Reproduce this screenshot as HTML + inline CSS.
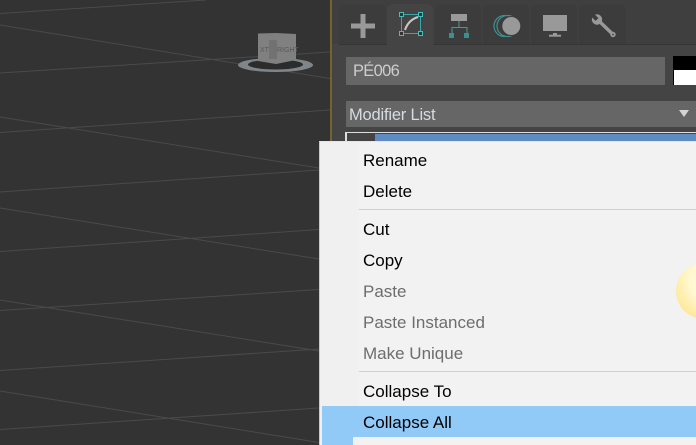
<!DOCTYPE html>
<html>
<head>
<meta charset="utf-8">
<style>
html,body{margin:0;padding:0;width:696px;height:445px;overflow:hidden;background:#333;font-family:"Liberation Sans",sans-serif}
.a{position:absolute}
#root{position:relative;width:696px;height:445px;overflow:hidden}
.tab{position:absolute;top:4px;height:40px;background:#3c3c3c;border-radius:6px 6px 0 0}
.m{position:absolute;left:363px;font-size:17px;line-height:22px;color:#000;white-space:nowrap}
.d{color:#6d6d6d}
.sep{position:absolute;left:359px;right:0;height:1px;background:#d0d0d0}
</style>
</head>
<body>
<div id="root">
<svg class="a" style="left:0;top:0" width="332" height="445" stroke="#4a4a4a" stroke-width="1" fill="none">
<path d="M0 13.500L206 0M0 25L330 78.500M0 73L330 52M0 117L319 168M0 132.500L330 110M0 192L319 170M0 208L319 259M0 251.500L319 229.500M0 300L319 351M0 310.500L319 289.500M0 370.500L319 349M0 391L319 442.500M0 429.500L319 408"/>
</svg>
<svg class="a" style="left:236px;top:30px" width="80" height="44">
<ellipse cx="39.500" cy="35" rx="37.500" ry="7" fill="#7f8588"/>
<ellipse cx="39.500" cy="34.500" rx="27.500" ry="5" fill="#2c2c2c"/>
<path d="M22 3.500L40 3L60 4V30L40 34L22 31Z" fill="#808080"/>
<rect x="33" y="10" width="8" height="19" fill="#727272"/>
<text x="24" y="22" font-family="Liberation Sans" font-size="7" fill="#595959">XT</text>
<text x="41" y="22" font-family="Liberation Sans" font-size="7" fill="#595959">RIGHT</text>
</svg>

<div class="a" style="left:330px;top:0;width:366px;height:445px;background:#444"></div>
<div class="a" style="left:330px;top:0;width:2px;height:445px;background:#75622c"></div>
<div class="a" style="left:332px;top:0;width:364px;height:44px;background:#3f3f3f"></div>
<div class="a" style="left:339px;top:44px;width:357px;height:1px;background:#363636"></div>

<div class="tab" style="left:339px;width:47px"></div>
<div class="tab" style="left:387px;width:46px;background:#444;height:41px"></div>
<div class="tab" style="left:435px;width:46px"></div>
<div class="tab" style="left:483px;width:46px"></div>
<div class="tab" style="left:531px;width:46px"></div>
<div class="tab" style="left:579px;width:47px"></div>

<svg class="a" style="left:330px;top:0" width="310" height="44">
<!-- plus -->
<path d="M21 23.500H30.500V14H35.500V23.500H45V28.500H35.500V38H30.500V28.500H21Z" fill="#999"/>
<!-- modify -->
<path d="M71.500 14.500H90.500V33.500H71.500Z" fill="none" stroke="#3ba7a8" stroke-width="1"/>
<rect x="69.500" y="12.500" width="4" height="4" fill="#333" stroke="#3fc0c0" stroke-width="1"/>
<rect x="88.500" y="12.500" width="4" height="4" fill="#333" stroke="#3fc0c0" stroke-width="1"/>
<rect x="69.500" y="31.500" width="4" height="4" fill="#333" stroke="#3fc0c0" stroke-width="1"/>
<rect x="88.500" y="31.500" width="4" height="4" fill="#333" stroke="#3fc0c0" stroke-width="1"/>
<path d="M75 30C77 24 81.500 19 88 17" fill="none" stroke="#c9c9c9" stroke-width="2"/>
<!-- hierarchy -->
<rect x="121" y="14" width="16" height="7" fill="#999"/>
<path d="M129 21V28M122 33V27.500H137V33" fill="none" stroke="#3f9a9a" stroke-width="1"/>
<rect x="119" y="33" width="5" height="5" fill="#3a8f90"/>
<rect x="134" y="33" width="5" height="5" fill="#3a8f90"/>
<!-- motion -->
<circle cx="174.500" cy="26" r="10.500" fill="none" stroke="#3f8f90" stroke-width="1.200"/>
<circle cx="177.500" cy="26" r="10.500" fill="#3c3c3c" stroke="#3f8f90" stroke-width="1.200"/>
<circle cx="181" cy="26" r="10" fill="#3c3c3c"/>
<circle cx="181.300" cy="26" r="9" fill="#999"/>
<!-- display -->
<rect x="213" y="15" width="24" height="16" fill="#999"/>
<rect x="223" y="33" width="4" height="2" fill="#999"/>
<rect x="219" y="34.700" width="12" height="2" fill="#999"/>
<!-- wrench -->
<path d="M269 21L282.500 34" stroke="#999" stroke-width="3.400" stroke-linecap="round" fill="none"/>
<circle cx="267" cy="19.500" r="5.200" fill="#999"/>
<path d="M267 19.500L261.500 14" stroke="#3c3c3c" stroke-width="4" fill="none"/>
<circle cx="283" cy="34.500" r="2.700" fill="#999"/>
<circle cx="283" cy="34.500" r="1" fill="#555"/>
</svg>

<div class="a" style="left:346px;top:57px;width:319px;height:28px;background:#666"></div>
<div class="a" style="left:353px;top:60px;font-size:16.500px;line-height:22px;letter-spacing:-.7px;color:#cdcdcd;white-space:nowrap">PÉ006</div>
<div class="a" style="left:673px;top:56px;width:23px;height:14px;background:#000"></div>
<div class="a" style="left:673px;top:70px;width:23px;height:15px;background:#fff;border-left:1px solid #000;box-sizing:border-box"></div>

<div class="a" style="left:346px;top:101px;width:350px;height:26px;background:#666"></div>
<div class="a" style="left:349px;top:104px;font-size:16.500px;line-height:22px;letter-spacing:-.2px;color:#d4dde2;white-space:nowrap">Modifier List</div>
<svg class="a" style="left:678px;top:109px" width="12" height="10"><path d="M1 1H11L6 8Z" fill="#d5d5d5"/></svg>

<div class="a" style="left:345px;top:132px;width:351px;height:1px;background:#ddd"></div>
<div class="a" style="left:345px;top:132px;width:2px;height:12px;background:#ddd"></div>
<div class="a" style="left:347px;top:133px;width:28px;height:10px;background:#444"></div>
<div class="a" style="left:375px;top:134px;width:321px;height:9px;background:#5f8ac2"></div>

<div class="a" style="left:319px;top:141px;width:377px;height:304px;background:#f0f0f0;border-left:1px solid #c9c9c9;border-top:1px solid #e6e6e6;box-sizing:border-box"></div>
<div class="a" style="left:359px;top:142px;width:337px;height:303px;background:#f2f2f2"></div>

<div class="sep" style="top:209px"></div>
<div class="sep" style="top:371px"></div>

<div class="a" style="left:676px;top:263px;width:56px;height:56px;border-radius:50%;background:radial-gradient(circle at 62% 32%,#fffbe0 0%,#fff8d2 40%,#ffeca6 68%,#fcdc80 100%)"></div>

<div class="a" style="left:322px;top:406px;width:374px;height:31px;background:#91c9f7"></div>
<div class="a" style="left:322px;top:437px;width:31px;height:8px;background:#91c9f7"></div>

<div class="m" style="top:150px">Rename</div>
<div class="m" style="top:181px">Delete</div>
<div class="m" style="top:219px">Cut</div>
<div class="m" style="top:250px">Copy</div>
<div class="m d" style="top:281px">Paste</div>
<div class="m d" style="top:312px">Paste Instanced</div>
<div class="m d" style="top:343px">Make Unique</div>
<div class="m" style="top:381px">Collapse To</div>
<div class="m" style="top:412px">Collapse All</div>
</div>
</body>
</html>
